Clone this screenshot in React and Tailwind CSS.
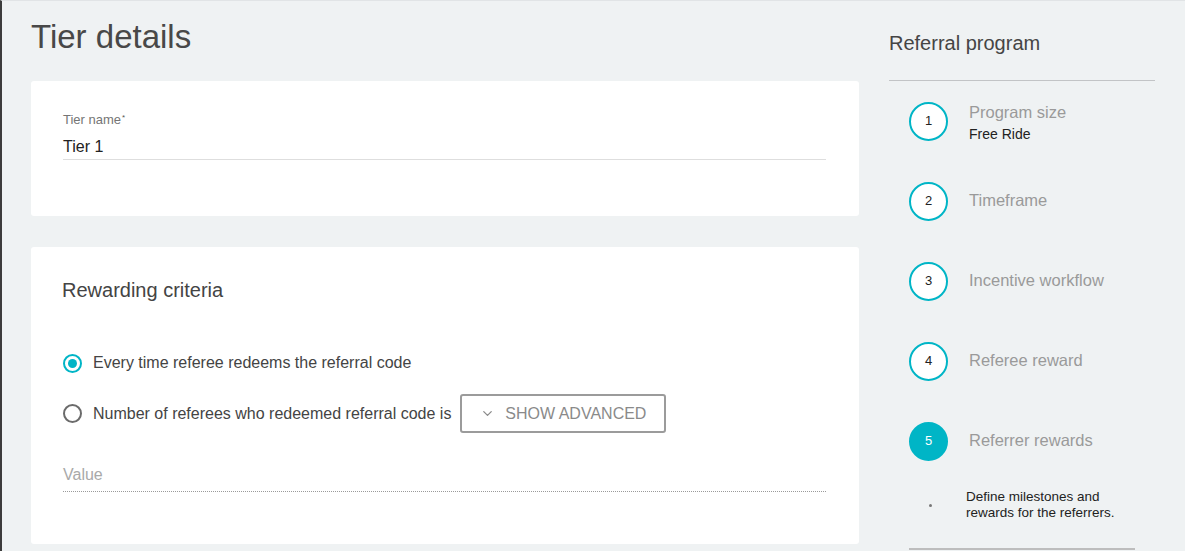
import React from 'react'
import { ChevronDown } from 'lucide-react'

const steps = [
  { n: 1, title: 'Program size', sub: 'Free Ride' },
  { n: 2, title: 'Timeframe' },
  { n: 3, title: 'Incentive workflow' },
  { n: 4, title: 'Referee reward' },
  { n: 5, title: 'Referrer rewards', active: true },
]

function Radio({ checked }) {
  return (
    <span
      className={`flex items-center justify-center w-[19px] h-[19px] rounded-full border-2 bg-white ${
        checked ? 'border-[#00b5c6]' : 'border-[#6b6b6b]'
      }`}
    >
      {checked && <span className="w-[9px] h-[9px] rounded-full bg-[#00b5c6]" />}
    </span>
  )
}

export default function App() {
  return (
    <div
      className="w-[1185px] h-[551px] overflow-hidden bg-[#eff2f3] border-l-2 border-l-[#3c3c3c] border-t border-t-[#e1e4e6] flex"
      style={{ fontFamily: '"Liberation Sans", Arial, sans-serif' }}
    >
      {/* Main column */}
      <div className="w-[857px] pl-[29px] shrink-0">
        <h1 className="pt-[16px] text-[33px] leading-10 text-[#484848]">Tier details</h1>

        {/* Tier name card */}
        <div className="mt-[24px] h-[135px] bg-white rounded-[3px] pt-[31px] pl-8 pr-[33px]">
          <div className="text-[13px] leading-4 text-[#757575]">
            Tier name<sup className="text-[8px] ml-px text-[#555]">*</sup>
          </div>
          <div className="mt-[9px] pb-[2px] text-[16px] leading-5 text-[#222] border-b border-[#dedede]">Tier 1</div>
        </div>

        {/* Rewarding criteria card */}
        <div className="mt-[31px] h-[297px] bg-white rounded-[3px] pt-[31px] pl-8 pr-[33px]">
          <h2 className="-ml-px text-[20px] leading-6 text-[#444]">Rewarding criteria</h2>

          <div className="mt-[41px] h-[40px] flex items-center gap-[11px]">
            <Radio checked />
            <span className="text-[16px] text-[#444]">Every time referee redeems the referral code</span>
          </div>

          <div className="mt-[11px] h-[39px] flex items-center">
            <Radio />
            <span className="ml-[11px] text-[16px] text-[#444]">Number of referees who redeemed referral code is</span>
            <button className="ml-[9px] h-[39px] w-[206px] border-2 border-[#9b9b9b] rounded-[3px] flex items-center justify-center gap-[10px] text-[16px] text-[#8a8a8a] uppercase">
              <ChevronDown size={15} strokeWidth={2} />
              Show advanced
            </button>
          </div>

          <div className="mt-[32px] pb-[6px] text-[16px] leading-5 text-[#a9a9a9] border-b border-dotted border-[#9a9a9a]">
            Value
          </div>
        </div>
      </div>

      {/* Sidebar */}
      <aside className="ml-[30px] w-[266px] shrink-0">
        <h2 className="pt-[30px] text-[20px] leading-6 text-[#454545]">Referral program</h2>
        <div className="mt-[25px] border-t border-[#c2c4c6]" />

        <ol className="pl-5">
          {steps.map((s) => (
            <li key={s.n} className="h-20 flex items-center gap-[21px]">
              <span
                className={`w-[39px] h-[39px] shrink-0 rounded-full border-2 border-[#00b5c6] flex items-center justify-center text-[13px] ${
                  s.active ? 'bg-[#00b5c6] text-white' : 'bg-white text-[#222]'
                }`}
              >
                {s.n}
              </span>
              <div className={s.sub ? 'mt-[3px]' : '-mt-[2px]'}>
                <div className="text-[16.5px] leading-5 text-[#9a9a9a]">{s.title}</div>
                {s.sub && <div className="mt-[2px] text-[14px] leading-5 text-[#222]">{s.sub}</div>}
              </div>
            </li>
          ))}
        </ol>

        <div className="mt-2 pl-[40px] flex items-center">
          <span className="w-[3px] h-[3px] rounded-full bg-[#777] shrink-0" />
          <p className="ml-[34px] text-[13.5px] leading-4 text-[#222]">
            Define milestones and
            <br />
            rewards for the referrers.
          </p>
        </div>
        <div className="mt-[27px] ml-5 w-[226px] border-t-2 border-[#bdbdbd]" />
      </aside>
    </div>
  )
}
